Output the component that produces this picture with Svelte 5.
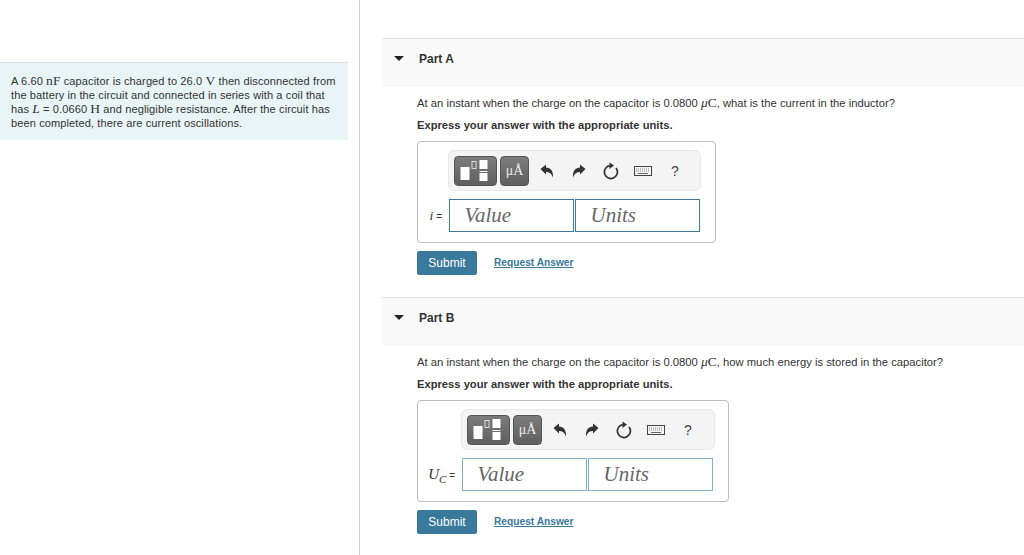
<script>
  const parts = [
    {
      name: "Part A",
      before: "At an instant when the charge on the capacitor is 0.0800 ",
      after: ", what is the current in the inductor?",
      indent: false,
      focus: false
    },
    {
      name: "Part B",
      before: "At an instant when the charge on the capacitor is 0.0800 ",
      after: ", how much energy is stored in the capacitor?",
      indent: true,
      focus: true
    }
  ];
</script>

<div class="page">
  <aside class="left">
    <div class="problem">
      A 6.60 <span class="m">nF</span> capacitor is charged to 26.0 <span class="m">V</span> then disconnected from
      the battery in the circuit and connected in series with a coil that
      has <i class="m">L</i> = 0.0660 <span class="m">H</span> and negligible resistance. After the circuit has
      been completed, there are current oscillations.
    </div>
  </aside>

  <main class="right">
    {#each parts as part}
      <section class="part">
        <div class="part-head">
          <span class="caret"></span>
          <h2>{part.name}</h2>
        </div>
        <div class="part-body">
          <p class="question">{part.before}<i class="m mu">μ</i><span class="m">C</span>{part.after}</p>
          <p class="express">Express your answer with the appropriate units.</p>

          <div class="answer" class:wide={part.indent}>
            <div class="toolbar">
              <button class="tool templates" aria-label="templates">
                <svg width="41" height="28" viewBox="0 0 41 28">
                  <rect x="5.500" y="10" width="9" height="13" fill="#fff" />
                  <rect x="17" y="4.500" width="4" height="7" fill="none" stroke="#ddd" stroke-width="1" />
                  <rect x="24.500" y="3" width="8" height="9" fill="#fff" />
                  <rect x="24.500" y="14" width="8" height="1" fill="#fff" />
                  <rect x="24.500" y="16" width="8" height="8" fill="#fff" />
                </svg>
              </button>
              <button class="tool symbols">μÅ</button>
              <span class="icon">
                <svg width="14" height="14" viewBox="0 0 14 14"><path d="M0.500 5 6 0.500V3.500C10.500 3.500 13.500 7 13 13.500 11.500 9.800 9.500 8 6 8V10.500Z" fill="#333" /></svg>
              </span>
              <span class="icon">
                <svg width="14" height="14" viewBox="0 0 14 14"><path d="M13.500 5 8 0.500V3.500C3.500 3.500 0.500 7 1 13.500 2.500 9.800 4.500 8 8 8V10.500Z" fill="#333" /></svg>
              </span>
              <span class="icon">
                <svg width="16" height="18" viewBox="0 0 16 18"><path d="M7 3.600A6.500 6.500 0 1 0 13 6" fill="none" stroke="#333" stroke-width="1.700" /><path d="M6.500 0.500V7L11 3.600Z" fill="#333" /></svg>
              </span>
              <span class="icon">
                <svg width="18" height="10" viewBox="0 0 18 10"><rect x="0.500" y="0.500" width="17" height="9" fill="#f4f4f4" stroke="#444" /><path d="M2 3H16M2 5H16" stroke="#888" stroke-width="1" stroke-dasharray="1 1" /><path d="M4 7.500H14" stroke="#666" /></svg>
              </span>
              <span class="icon help">?</span>
            </div>

            <div class="inputs">
              <span class="label">
                {#if part.indent}
                  <i class="m big">U<sub>C</sub></i> =
                {:else}
                  <i class="m">i</i> =
                {/if}
              </span>
              <div class="field" class:focus={part.focus}>Value</div>
              <div class="field" class:focus={part.focus}>Units</div>
            </div>
          </div>

          <div class="actions">
            <button class="submit">Submit</button>
            <span class="request">Request Answer</span>
          </div>
        </div>
      </section>
    {/each}
  </main>
</div>

<style>
  :global(body) {
    background: #fff;
    font-family: "Liberation Sans", Arial, sans-serif;
    color: #333;
  }

  .page {
    display: flex;
    height: 555px;
    overflow: hidden;
  }

  .left {
    width: 359px;
    flex-shrink: 0;
    padding-top: 62px;
    border-right: 1px solid #ccc;
    box-sizing: content-box;
  }

  .problem {
    width: 348px;
    box-sizing: border-box;
    height: 78px;
    padding: 11px 10px 0 11px;
    background: #e9f4f6;
    border-top: 1px solid #d9e0e2;
    font-size: 11.050px;
    line-height: 13.700px;
    letter-spacing: 0.1px;
  }

  .m {
    font-family: "Liberation Serif", "DejaVu Serif", serif;
    font-size: 13.500px;
    line-height: 1;
  }

  .right {
    flex: 1;
    padding: 38px 0 0 22px;
    min-width: 0;
  }

  .part {
    height: 259px;
  }

  .part-head {
    display: flex;
    align-items: center;
    height: 49px;
    box-sizing: border-box;
    padding: 0 0 9px 12px;
    background: #f9f9f9;
    border-top: 1px solid #e2e2e2;
  }

  .caret {
    width: 0;
    height: 0;
    border-left: 5.500px solid transparent;
    border-right: 5.500px solid transparent;
    border-top: 5px solid #222;
  }

  h2 {
    margin: 0 0 0 15px;
    font-size: 12px;
    font-weight: bold;
    color: #333;
  }

  .part-body {
    padding-left: 35px;
  }

  .question {
    margin: 9px 0 0;
    font-size: 11.250px;
    line-height: 14px;
  }

  .express {
    margin: 8px 0 0;
    font-size: 11.200px;
    line-height: 14px;
    font-weight: bold;
  }

  .answer {
    box-sizing: border-box;
    width: 299px;
    height: 102px;
    margin-top: 9px;
    padding: 8px 14px 0 8px;
    border: 1px solid #bbb;
    border-radius: 4px;
  }

  .answer.wide {
    width: 312px;
  }

  .toolbar {
    display: flex;
    align-items: center;
    box-sizing: border-box;
    width: 253px;
    height: 41px;
    margin-left: 22px;
    padding-left: 5px;
    background: #f4f4f4;
    border: 1px solid #e8e8e8;
    border-radius: 6px;
  }

  .wide .toolbar {
    margin-left: 35px;
    width: 254px;
  }

  .tool {
    height: 30px;
    padding: 0;
    border: 1px solid #555;
    border-radius: 4px;
    background: linear-gradient(#7c7c7c, #5f5f5f);
    color: #eee;
    display: flex;
    align-items: center;
    justify-content: center;
  }

  .templates {
    width: 43px;
  }

  .symbols {
    width: 29px;
    margin: 0 2px 0 3px;
    font-family: "Liberation Serif", serif;
    font-size: 14px;
  }

  .icon {
    width: 32px;
    display: flex;
    justify-content: center;
    align-items: center;
    flex-shrink: 0;
  }

  .help {
    font-size: 14px;
    color: #444;
  }

  .inputs {
    display: flex;
    align-items: center;
    margin-top: 8px;
  }

  .label {
    width: 23px;
    flex-shrink: 0;
    font-size: 10px;
    text-align: right;
    padding-right: 7px;
    box-sizing: border-box;
    white-space: nowrap;
  }

  .wide .label {
    width: 36px;
  }

  .label .big {
    font-size: 15px;
  }

  .label sub {
    font-size: 11px;
    line-height: 0;
  }

  .field {
    box-sizing: border-box;
    width: 125px;
    height: 33px;
    margin-right: 1px;
    padding-left: 14.500px;
    border: 1px solid #3b7a9e;
    font-family: "Liberation Serif", serif;
    font-style: italic;
    font-size: 21px;
    line-height: 31px;
    color: #666;
  }

  .field.focus {
    border-color: #7fb2cc;
  }

  .actions {
    display: flex;
    align-items: center;
    margin-top: 8px;
  }

  .submit {
    width: 60px;
    height: 24px;
    padding: 0;
    border: none;
    border-radius: 2px;
    background: #38799c;
    color: #fff;
    font-family: "Liberation Sans", Arial, sans-serif;
    font-size: 12px;
  }

  .request {
    margin: 0 0 2px 17px;
    font-size: 10.200px;
    font-weight: bold;
    color: #38799c;
    text-decoration: underline;
  }
</style>
